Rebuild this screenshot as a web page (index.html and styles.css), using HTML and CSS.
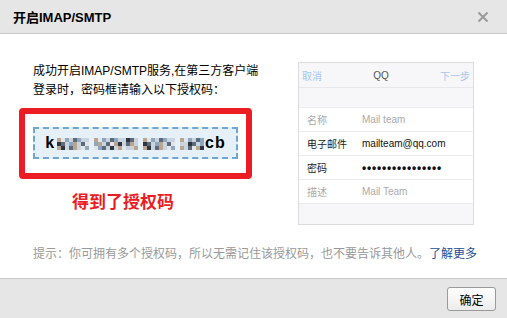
FILE: index.html
```html
<!DOCTYPE html>
<html lang="zh-CN">
<head>
  <meta charset="UTF-8" />
  <title>开启IMAP/SMTP</title>
  <link rel="stylesheet" href="styles.css">
</head>
<body>

<div class="dialog">
  <div class="dlg-head">
    <span class="dlg-title">开启IMAP/SMTP</span>
    <svg class="dlg-close" width="12" height="12" viewBox="0 0 12 12">
      <path d="M1.5 1.5 L10.5 10.5 M10.5 1.5 L1.5 10.5" stroke="#9a9a9a" stroke-width="2" fill="none" />
    </svg>
  </div>

  <div class="dlg-body">
    <div class="main">
      <div class="left">
        <p class="intro">成功开启IMAP/SMTP服务,在第三方客户端<br>登录时，密码框请输入以下授权码：</p>
        <div class="mark">
          <div class="code">
            <span>k</span>
            <span class="blur c8 first"><i></i><i></i><i></i><i></i><i></i><i></i><i></i><i></i><i></i><i></i><i></i><i></i><i></i><i></i><i></i><i></i><i></i><i></i><i></i><i></i><i></i><i></i><i></i><i></i></span>
            <span class="blur c11"><i></i><i></i><i></i><i></i><i></i><i></i><i></i><i></i><i></i><i></i><i></i><i></i><i></i><i></i><i></i><i></i><i></i><i></i><i></i><i></i><i></i><i></i><i></i><i></i><i></i><i></i><i></i><i></i><i></i><i></i><i></i><i></i><i></i></span>
            <span class="blur c8"><i></i><i></i><i></i><i></i><i></i><i></i><i></i><i></i><i></i><i></i><i></i><i></i><i></i><i></i><i></i><i></i><i></i><i></i><i></i><i></i><i></i><i></i><i></i><i></i></span>
            <span class="blur c6"><i></i><i></i><i></i><i></i><i></i><i></i><i></i><i></i><i></i><i></i><i></i><i></i><i></i><i></i><i></i><i></i><i></i><i></i></span>
            <span class="tail">cb</span>
          </div>
        </div>
        <div class="got">得到了授权码</div>
      </div>

      <div class="phone">
        <div class="ph-head">
          <span class="ph-link">取消</span>
          <span class="ph-title">QQ</span>
          <span class="ph-link">下一步</span>
        </div>
        <div class="ph-band"></div>
        <div class="ph-row"><span class="ph-label muted">名称</span><span class="ph-val muted">Mail team</span></div>
        <div class="ph-row"><span class="ph-label">电子邮件</span><span class="ph-val">mailteam@qq.com</span></div>
        <div class="ph-row"><span class="ph-label">密码</span><span class="ph-val dots">••••••••••••••••</span></div>
        <div class="ph-row"><span class="ph-label muted">描述</span><span class="ph-val muted">Mail Team</span></div>
        <div class="ph-band end"></div>
      </div>
    </div>

    <p class="tip">提示：你可拥有多个授权码，所以无需记住该授权码，也不要告诉其他人。<a href="#">了解更多</a></p>
  </div>

  <div class="dlg-foot">
    <button type="button">确定</button>
  </div>
</div>

</body>
</html>
```

FILE: styles.css
```css
body {
  margin: 0;
  background-color: #fff;
  font-family: "Liberation Sans", "Noto Sans CJK SC", sans-serif;
  font-size: 12px;
  color: #000;
}
.dialog {
  width: 507px;
  height: 318px;
  display: flex;
  flex-direction: column;
}
.dlg-head {
  height: 33px;
  background-color: #e6e6e6;
  border-bottom: 1px solid #c8c8c8;
  display: flex;
  align-items: center;
  justify-content: space-between;
  padding: 0 18px 0 13px;
}
.dlg-title {
  font-size: 13px;
  font-weight: bold;
}
.dlg-body {
  height: 244px;
  padding: 28px 0 0 33px;
  box-sizing: border-box;
}
.main {
  display: flex;
  gap: 40px;
}
.left {
  width: 225px;
}
.intro {
  margin: 0;
  line-height: 19px;
  white-space: nowrap;
  color: #000;
}
.mark {
  margin: 8px 0 0 -14px;
  width: 233px;
  height: 71px;
  box-sizing: border-box;
  border: 6px solid #ec1c24;
  border-radius: 4px;
  padding: 13px 0 0 8px;
}
.code {
  width: 205px;
  height: 32px;
  box-sizing: border-box;
  border: 2px dashed #6fa6d2;
  background-color: #e5f0f8;
  display: flex;
  align-items: center;
  justify-content: center;
  gap: 5px;
  font-size: 16px;
  font-weight: bold;
  letter-spacing: 1px;
}
.code .first {
  margin-left: -3px;
}
.code .tail {
  margin-left: -4px;
}
.blur {
  display: inline-grid;
  grid-auto-rows: 4px;
  height: 12px;
  margin-top: 2px;
}
.blur.c6 { grid-template-columns: repeat(6, 4px); }
.blur.c8 { grid-template-columns: repeat(8, 4px); }
.blur.c11 { grid-template-columns: repeat(11, 4px); }
.blur i {
  background-color: #c9d4de;
}
.blur i:nth-child(3n) { background-color: #8ea6be; }
.blur i:nth-child(4n+1) { background-color: #b9a690; }
.blur i:nth-child(5n) { background-color: #5c6a7c; }
.blur i:nth-child(7n+2) { background-color: #e2e6ea; }
.blur i:nth-child(9n) { background-color: #2f3541; }
.got {
  margin: 12px 0 0 39px;
  font-size: 17px;
  line-height: 24px;
  font-weight: bold;
  color: #ec1c24;
}
.phone {
  width: 176px;
  height: 163px;
  box-sizing: border-box;
  border: 1px solid #dcdcdc;
  background-color: #f7f7f9;
  font-size: 10px;
}
.ph-head {
  height: 24px;
  border-bottom: 1px solid #e8e8ea;
  display: flex;
  align-items: center;
  justify-content: space-between;
  padding: 0 3px 0 3px;
}
.ph-link {
  color: #a6c6ec;
}
.ph-title {
  color: #555;
}
.ph-band {
  height: 19px;
}
.ph-band.end {
  height: 20px;
  border-top: 1px solid #ececee;
}
.ph-row {
  height: 23px;
  border-top: 1px solid #ececee;
  background-color: #fff;
  display: flex;
  align-items: center;
  padding-left: 8px;
}
.ph-label {
  width: 55px;
  color: #222;
}
.ph-val {
  color: #111;
}
.muted {
  color: #aaa;
}
.dots {
  font-size: 12px;
  font-weight: bold;
  letter-spacing: 0.8px;
}
.tip {
  margin: 20px 0 0 0;
  line-height: 18px;
  color: #999;
}
.tip a {
  color: #1d4f96;
  text-decoration: none;
}
.dlg-foot {
  flex: 1;
  background-color: #e6e6e6;
  border-top: 1px solid #c8c8c8;
  display: flex;
  justify-content: flex-end;
  align-items: flex-start;
  padding: 8px 11px 0 0;
}
.dlg-foot button {
  width: 49px;
  height: 24px;
  border: 1px solid #9a9a9a;
  border-radius: 3px;
  background: linear-gradient(#fff, #ececec);
  font-family: "Liberation Sans", "Noto Sans CJK SC", sans-serif;
  font-size: 12px;
  color: #000;
  padding: 0;
}
```
